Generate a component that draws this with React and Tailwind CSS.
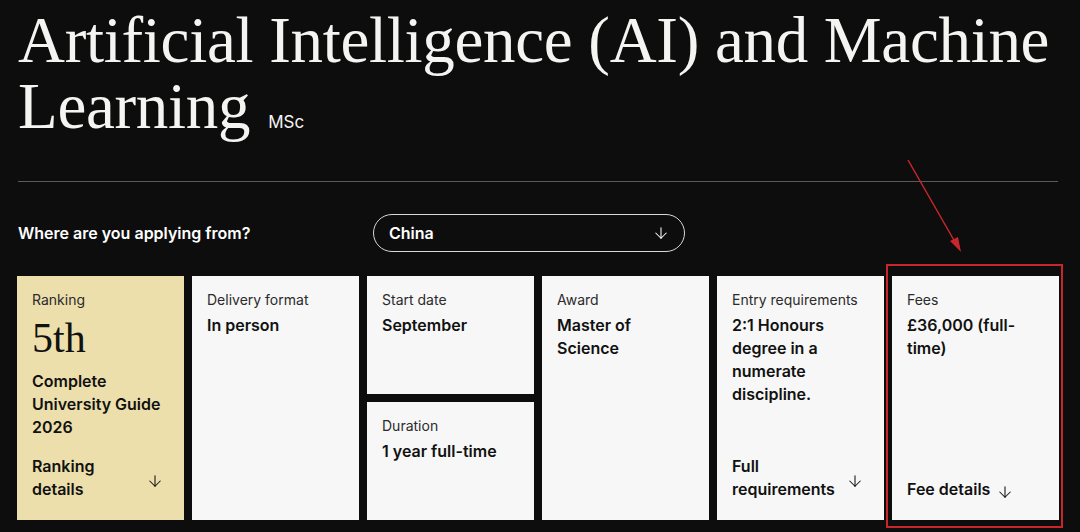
import { ArrowDown } from 'lucide-react';

const sans = { fontFamily: 'Inter, "Liberation Sans", sans-serif' };

function Card({ label, children, footer, footerInline, className = '' }) {
  return (
    <div className={`flex flex-col px-[15px] pt-[14px] pb-[19px] ${className}`}>
      <div className="text-[14px] leading-[20px] text-[#2b2b2b]">{label}</div>
      <div className="mt-[4px] text-[16px] leading-[23px] font-semibold text-[#111]">{children}</div>
      {footer && (
        <div className="mt-auto flex items-center justify-between text-[16px] leading-[23px] font-semibold text-[#111]">
          <span>{footer}</span>
          <ArrowDown size={18} strokeWidth={1.4} className="mt-[6px] mr-[5px]" />
        </div>
      )}
      {footerInline && (
        <div className="mt-auto flex items-end gap-[6px] text-[16px] leading-[23px] font-semibold text-[#111]">
          <span>{footerInline}</span>
          <ArrowDown size={18} strokeWidth={1.4} className="mb-[0px]" />
        </div>
      )}
    </div>
  );
}

export default function App() {
  return (
    <div className="relative w-[1080px] h-[532px] overflow-hidden bg-[#0d0d0d] text-white" style={sans}>
      <div className="pl-[18px] pr-[22px]">
        {/* Title */}
        <h1
          className="pt-[7px] text-[65px] leading-[66px] text-[#f4f4f2] tracking-[-0.3px]"
          style={{ fontFamily: '"Liberation Serif", serif' }}
        >
          Artificial Intelligence (AI) and Machine
          <br />
          Learning
          <span className="ml-[18px] text-[17px] leading-none tracking-normal" style={sans}>MSc</span>
        </h1>

        <div className="mt-[42px] h-px bg-[#5a5a5a]" />

        {/* Country select */}
        <div className="mt-[32px] flex items-center">
          <div className="w-[355px] text-[16px] font-semibold">Where are you applying from?</div>
          <div className="flex h-[38px] w-[312px] items-center justify-between rounded-full border border-[#d8d8d8] pl-[15px] pr-[14px]">
            <span className="text-[16px] font-semibold">China</span>
            <ArrowDown size={18} strokeWidth={1.4} />
          </div>
        </div>
      </div>

      {/* Cards */}
      <div className="mt-[24px] grid h-[244px] w-[1059px] grid-cols-6 gap-[8px] pl-[17px]">
        <div className="flex flex-col bg-[#ecdfac] px-[15px] pt-[14px] pb-[19px] text-[#111]">
          <div className="text-[14px] leading-[20px] text-[#2b2b2b]">Ranking</div>
          <div className="mt-[6px] text-[42px] leading-[44px]" style={{ fontFamily: '"Liberation Serif", serif' }}>5th</div>
          <div className="mt-[10px] text-[16px] leading-[23px] font-semibold">
            Complete
            <br />
            University Guide
            <br />
            2026
          </div>
          <div className="mt-auto flex items-center justify-between text-[16px] leading-[23px] font-semibold">
            <span>
              Ranking
              <br />
              details
            </span>
            <ArrowDown size={18} strokeWidth={1.4} className="mt-[6px] mr-[5px]" />
          </div>
        </div>

        <Card label="Delivery format" className="bg-[#f7f7f7]">In person</Card>

        <div className="flex flex-col gap-[8px]">
          <Card label="Start date" className="flex-1 bg-[#f7f7f7]">September</Card>
          <Card label="Duration" className="flex-1 bg-[#f7f7f7]">1 year full-time</Card>
        </div>

        <Card label="Award" className="bg-[#f7f7f7]">
          Master of
          <br />
          Science
        </Card>

        <Card
          label="Entry requirements"
          className="bg-[#f7f7f7]"
          footer={
            <>
              Full
              <br />
              requirements
            </>
          }
        >
          2:1 Honours
          <br />
          degree in a
          <br />
          numerate
          <br />
          discipline.
        </Card>

        <Card label="Fees" className="bg-[#f7f7f7]" footerInline="Fee details">
          £36,000 (full-
          <br />
          time)
        </Card>
      </div>

      {/* Annotation overlay */}
      <div className="pointer-events-none absolute left-[886px] top-[264px] h-[264px] w-[177px] border-[2.5px] border-[#c8262a]" />
      <svg className="pointer-events-none absolute left-0 top-0" width="1080" height="532">
        <line x1="908" y1="160" x2="955" y2="242" stroke="#c8262a" strokeWidth="1.5" />
        <polygon points="961,252 950,241 958,237" fill="#c8262a" />
      </svg>
    </div>
  );
}
